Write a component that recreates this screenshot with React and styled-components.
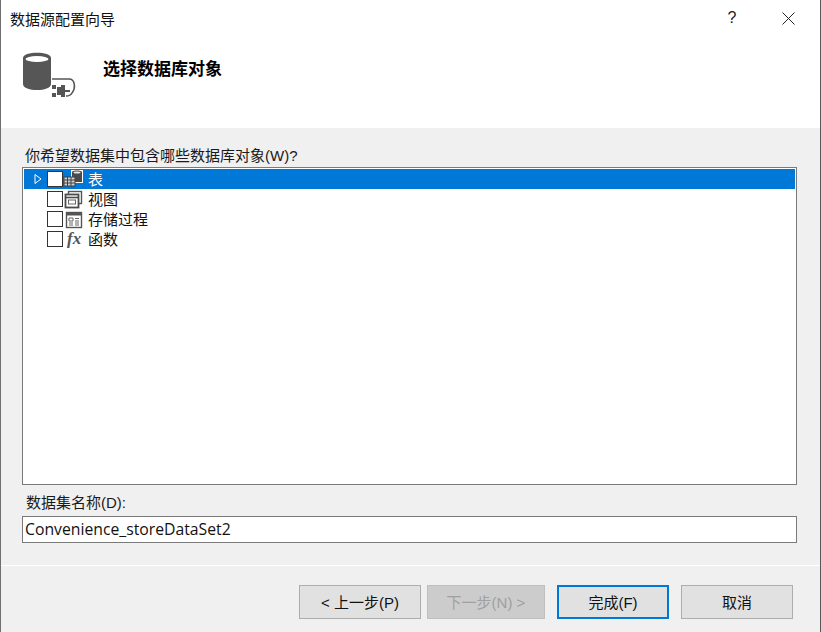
import styled, { createGlobalStyle } from 'styled-components';

const GlobalStyle = createGlobalStyle`
  html, body {
    margin: 0;
    padding: 0;
    background: #fff;
  }
`;

const FONT = `'Liberation Sans', 'Noto Sans CJK SC', sans-serif`;

const Window = styled.div`
  width: 821px;
  height: 632px;
  box-sizing: border-box;
  display: flex;
  flex-direction: column;
  border-left: 1px solid #6e6e6e;
  border-right: 1px solid #5a5a5a;
  font-family: ${FONT};
  color: #000;
  overflow: hidden;
`;

const TitleBar = styled.div`
  height: 38px;
  flex: none;
  display: flex;
  align-items: center;
  padding: 0 0 2px 9px;
  box-sizing: border-box;
  background: #fff;
`;

const Title = styled.div`
  flex: 1;
  font-size: 15px;
  color: #111;
`;

const Help = styled.div`
  width: 20px;
  margin-right: 40px;
  text-align: center;
  font-size: 16px;
  color: #222;
`;

const Close = styled.svg`
  width: 13px;
  height: 13px;
  margin-right: 25px;
`;

const Header = styled.div`
  height: 90px;
  flex: none;
  display: flex;
  align-items: flex-start;
  padding-left: 21px;
  background: #fff;
`;

const WizardIcon = styled.svg`
  width: 54px;
  height: 50px;
  margin-top: 14px;
  flex: none;
`;

const Heading = styled.h1`
  margin: 21px 0 0 27px;
  font-size: 17px;
  line-height: 22px;
  font-weight: 700;
`;

const Body = styled.div`
  flex: none;
  height: 438px;
  box-sizing: border-box;
  padding: 18px 23px 0 21px;
  background: #f0f0f0;
  border-bottom: 1px solid #fff;
`;

const FieldLabel = styled.div`
  height: 20px;
  line-height: 20px;
  font-size: 15px;
  color: #1a1a1a;
  padding-left: ${p => p.$indent || 0}px;
`;

const Tree = styled.div`
  height: 318px;
  box-sizing: border-box;
  margin: 1px 0 8px;
  padding: 1px;
  background: #fff;
  border: 1px solid #7a7a7a;
`;

const Row = styled.div`
  height: 20px;
  display: flex;
  align-items: center;
  background: ${p => (p.$selected ? '#0078d7' : 'transparent')};
  color: ${p => (p.$selected ? '#fff' : '#111')};
  font-size: 15px;
`;

const RowLabel = styled.span`
  margin-top: -2px;
`;

const Expander = styled.svg`
  width: 8px;
  height: 10px;
  margin-left: 10px;
  flex: none;
  visibility: ${p => (p.$visible ? 'visible' : 'hidden')};
`;

const Check = styled.span`
  width: 16px;
  height: 16px;
  box-sizing: border-box;
  margin-left: 5px;
  flex: none;
  background: #fff;
  border: 1px solid #333;
`;

const RowIcon = styled.svg`
  width: 20px;
  height: 20px;
  flex: none;
  margin-right: 5px;
`;

const NameInput = styled.input`
  display: block;
  width: 100%;
  height: 27px;
  box-sizing: border-box;
  margin-top: 3px;
  padding: 0 2px 2px;
  background: #fff;
  border: 1px solid #7a7a7a;
  border-radius: 0;
  outline: none;
  font-family: 'Open Sans', 'Noto Sans CJK SC', sans-serif;
  font-size: 15.75px;
  color: #111;
`;

const Footer = styled.div`
  flex: 1;
  display: flex;
  align-items: flex-start;
  padding: 19px 27px 0 298px;
  background: #f0f0f0;
`;

const Button = styled.div`
  width: ${p => p.$width}px;
  height: 34px;
  box-sizing: border-box;
  margin-right: ${p => p.$gap || 0}px;
  padding-bottom: 1px;
  display: flex;
  align-items: center;
  justify-content: center;
  font-size: 15px;
  background: ${p => (p.$disabled ? '#cccccc' : '#e1e1e1')};
  color: ${p => (p.$disabled ? '#a0a0a0' : '#111')};
  border: ${p =>
    p.$primary ? '2px solid #0078d7' : `1px solid ${p.$disabled ? '#bfbfbf' : '#adadad'}`};
`;

const TableIcon = () => (
  <RowIcon viewBox="0 0 20 20">
    <rect x="8" y="1" width="12" height="13" fill="#fff" />
    <path d="M9 3c0-2 10-2 10 0v10H9z" fill="#4a4a4a" />
    <ellipse cx="14" cy="3.500" rx="3.500" ry="1" fill="#e8e8e8" />
    <rect x="1" y="8" width="11" height="9" fill="#d0d0d0" stroke="#404040" />
    <path d="M1 11h11M1 14h11M4.500 8v9M8 8v9" stroke="#404040" strokeWidth="1" />
  </RowIcon>
);

const ViewIcon = () => (
  <RowIcon viewBox="0 0 20 20">
    <rect x="5.500" y="2.500" width="13" height="12" fill="#fff" stroke="#555" strokeWidth="1.400" />
    <rect x="2.500" y="5.500" width="13" height="13" fill="#fff" stroke="#4a4a4a" strokeWidth="1.800" />
    <path d="M2.500 8.500h13" stroke="#4a4a4a" strokeWidth="1.600" />
    <rect x="5.500" y="11" width="7" height="4" fill="#fff" stroke="#666" />
  </RowIcon>
);

const ProcIcon = () => (
  <RowIcon viewBox="0 0 20 20">
    <rect x="3.500" y="3.500" width="15" height="15" fill="#fff" stroke="#555" strokeWidth="1.400" />
    <rect x="3.500" y="3.500" width="15" height="3" fill="#555" />
    <path d="M6 9h4v3H6zM6 14h4M6 16h4M12 9.500h4M12 12h4M12 14h4M12 16h4" fill="none" stroke="#666" />
  </RowIcon>
);

const FxIcon = () => (
  <RowIcon viewBox="0 0 20 20">
    <text x="4" y="15" fontFamily="'Liberation Serif', serif" fontStyle="italic" fontWeight="700" fontSize="17" fill="#555">fx</text>
  </RowIcon>
);

const rows = [
  { label: '表', Icon: TableIcon, selected: true },
  { label: '视图', Icon: ViewIcon },
  { label: '存储过程', Icon: ProcIcon },
  { label: '函数', Icon: FxIcon },
];

export default function App() {
  return (
    <>
      <GlobalStyle />
      <Window>
        <TitleBar>
          <Title>数据源配置向导</Title>
          <Help>?</Help>
          <Close viewBox="0 0 13 13">
            <path d="M0.500 0.500l12 12M12.500 0.500l-12 12" stroke="#222" strokeWidth="1" fill="none" />
          </Close>
        </TitleBar>
        <Header>
          <WizardIcon viewBox="0 0 54 50">
            <path d="M1 6c0-7 28-7 28 0v26c0 8-28 8-28 0z" fill="#565656" />
            <ellipse cx="15" cy="7" rx="11.500" ry="3" fill="#fff" />
            <path d="M30 27h17c6 0 7 9 3 14-1 2-3 3-6 3" fill="none" stroke="#565656" strokeWidth="1.600" />
            <path d="M35 35h4v-2h4v12h-4v-2h-4z" fill="#565656" />
            <rect x="43" y="38" width="5" height="2" fill="#565656" />
            <rect x="30" y="33" width="4" height="4" fill="#565656" />
            <rect x="30" y="41" width="4" height="4" fill="#565656" />
          </WizardIcon>
          <Heading>选择数据库对象</Heading>
        </Header>
        <Body>
          <FieldLabel $indent={3}>你希望数据集中包含哪些数据库对象(W)?</FieldLabel>
          <Tree>
            {rows.map(({ label, Icon, selected }) => (
              <Row key={label} $selected={selected}>
                <Expander viewBox="0 0 8 10" $visible={selected}>
                  <path d="M1 0.500l6 4.500-6 4.500z" fill="none" stroke="#fff" />
                </Expander>
                <Check />
                <Icon />
                <RowLabel>{label}</RowLabel>
              </Row>
            ))}
          </Tree>
          <FieldLabel $indent={4}>数据集名称(D):</FieldLabel>
          <NameInput readOnly value="Convenience_storeDataSet2" />
        </Body>
        <Footer>
          <Button $width={122} $gap={6}>&lt; 上一步(P)</Button>
          <Button $width={118} $gap={12} $disabled>下一步(N) &gt;</Button>
          <Button $width={112} $gap={12} $primary>完成(F)</Button>
          <Button $width={112}>取消</Button>
        </Footer>
      </Window>
    </>
  );
}
